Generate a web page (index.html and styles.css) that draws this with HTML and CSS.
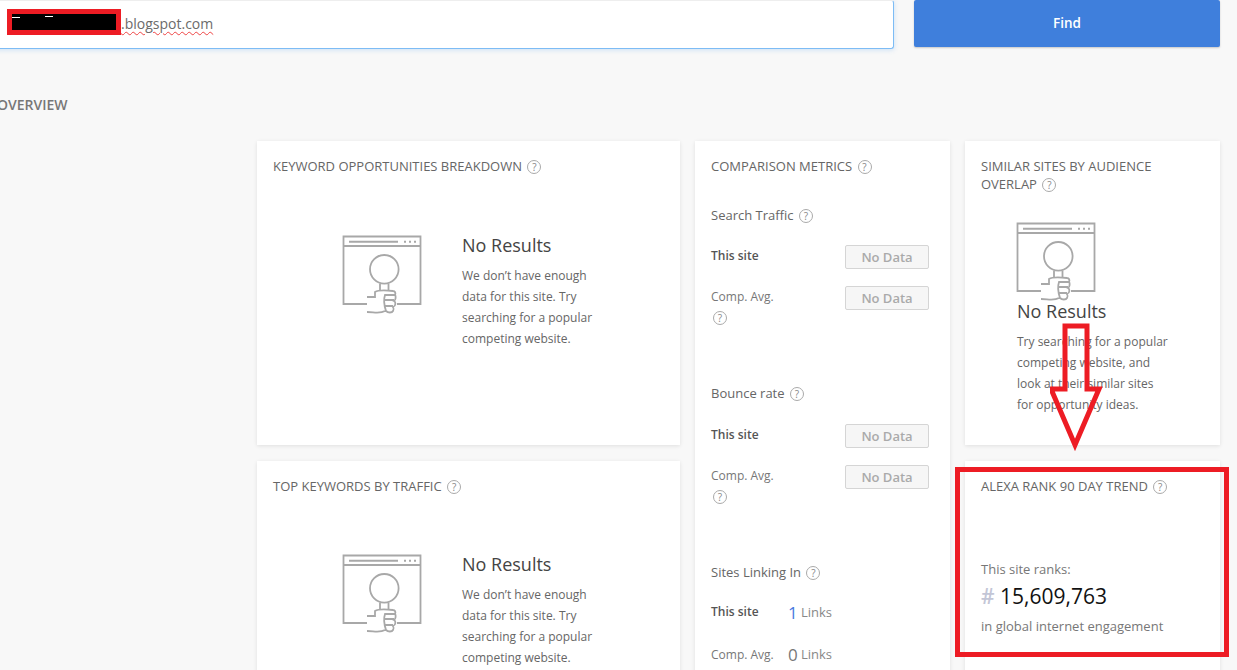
FILE: index.html
```html
<!DOCTYPE html>
<html lang="en">
<head>
<meta charset="utf-8">
<title>Site overview</title>
<link rel="stylesheet" href="styles.css">
</head>
<body>
<svg class="defs" width="0" height="0" aria-hidden="true">
  <symbol id="noresult" viewBox="0 0 80 80">
    <g fill="none" stroke="#a8a8a8" stroke-width="1.8">
      <path d="M25 69H1.5V1.5H78.5V69H55"/>
      <path d="M1.5 11H78.5"/>
      <path d="M7 6.7H56" stroke-width="2"/>
      <path d="M62 6.7h2M67 6.7h2M72 6.7h2" stroke-width="2"/>
      <circle cx="42.3" cy="34.3" r="14.3"/>
      <path d="M38 48.5V55M46.5 48.5V55"/>
      <path d="M25 62L33 62V57C36 55 42 55 51 56C53 56 54 58 53 60H43C42 63 42 70 44 76C46 78 50 78 51 76C52 74 52 74 51 72C54 71 54 67 52 66C54 65 54 61 53 60M43 65H52M43 71H51M43 76C38 79 32 77 25 77"/>
    </g>
  </symbol>
</svg>
<div class="page">
  <div class="search">
    <div class="search-input"><span class="typed">.blogspot.com</span></div>
    <button class="find">Find</button>
  </div>
  <h2 class="overview">OVERVIEW</h2>
  <div class="grid">
    <section class="card keyword">
      <h3>KEYWORD OPPORTUNITIES BREAKDOWN <i class="help">?</i></h3>
      <div class="empty">
        <svg class="ill"><use href="#noresult"/></svg>
        <div class="empty-text">
          <h4>No Results</h4>
          <p>We don’t have enough data for this site. Try searching for a popular competing website.</p>
        </div>
      </div>
    </section>
    <section class="card metrics">
      <h3>COMPARISON METRICS <i class="help">?</i></h3>
      <div class="metric">
        <div class="metric-title">Search Traffic <i class="help">?</i></div>
        <div class="row"><b>This site</b><span class="nodata">No Data</span></div>
        <div class="row"><span class="lbl">Comp. Avg. <i class="help">?</i></span><span class="nodata">No Data</span></div>
      </div>
      <div class="metric bounce">
        <div class="metric-title">Bounce rate <i class="help">?</i></div>
        <div class="row"><b>This site</b><span class="nodata">No Data</span></div>
        <div class="row"><span class="lbl">Comp. Avg. <i class="help">?</i></span><span class="nodata">No Data</span></div>
      </div>
      <div class="metric">
        <div class="metric-title">Sites Linking In <i class="help">?</i></div>
        <div class="links"><b>This site</b><span class="num blue">1</span><span class="unit">Links</span></div>
        <div class="links"><span class="lbl-short">Comp. Avg.</span><span class="num">0</span><span class="unit">Links</span></div>
      </div>
    </section>
    <section class="card similar">
      <h3>SIMILAR SITES BY AUDIENCE OVERLAP <i class="help">?</i></h3>
      <div class="similar-body">
        <svg class="ill"><use href="#noresult"/></svg>
        <h4>No Results</h4>
        <p>Try searching for a popular competing website, and look at their similar sites for opportunity ideas.</p>
      </div>
    </section>
    <section class="card keyword">
      <h3>TOP KEYWORDS BY TRAFFIC <i class="help">?</i></h3>
      <div class="empty lower">
        <svg class="ill"><use href="#noresult"/></svg>
        <div class="empty-text">
          <h4>No Results</h4>
          <p>We don’t have enough data for this site. Try searching for a popular competing website.</p>
        </div>
      </div>
    </section>
    <section class="card alexa">
      <h3>ALEXA RANK 90 DAY TREND <i class="help">?</i></h3>
      <p class="ranks">This site ranks:</p>
      <div class="rank"><span class="hash">#</span> 15,609,763</div>
      <p class="engage">in global internet engagement</p>
    </section>
  </div>
</div>
<div class="redact"></div>
<div class="redbox"></div>
<svg class="arrow" width="60" height="135" viewBox="0 0 60 135" aria-hidden="true">
  <path d="M15 3H37V66H49L25 122L1 66H15Z" fill="none" stroke="#ed1c24" stroke-width="5"/>
</svg>
</body>
</html>
```
FILE: styles.css
```css
* { box-sizing: border-box; }
html, body { margin: 0; height: 670px; overflow: hidden; }
body { position: relative; background: #f8f8f8; font-family: "Open Sans", "Liberation Sans", sans-serif; color: #666; }
.defs { position: absolute; }
.page { padding-right: 17px; height: 670px; overflow: hidden; }
.search { display: flex; gap: 20px; height: 48px; }
.search-input { flex: 1; margin-left: -10px; height: 49px; background: #fff; border: 1px solid #7dbcf5; border-top-color: #eee; border-left: 0; border-radius: 0 3px 3px 0; box-shadow: 0 1px 5px rgba(100,170,240,.3); padding: 13px 0 0 131px; font-size: 14px; line-height: 20px; color: #6b6b6b; }
.typed { text-decoration: underline wavy #e44; text-decoration-thickness: 1px; text-underline-offset: 2px; }
.find { width: 306px; height: 47px; border: 0; border-radius: 2px; background: #3f7fdc; color: #fff; font: 600 13.5px/45px "Open Sans", sans-serif; box-shadow: 0 1px 2px rgba(0,0,0,.2); padding: 0; }
.overview { margin: 48px 0 0 -3px; font-size: 14px; line-height: 18px; font-weight: 600; color: #777; height: 27px; }
.grid { display: grid; grid-template-columns: 423px 255px 255px; grid-template-rows: 304px 304px; gap: 16px 15px; margin-left: 257px; margin-top: 18px; }
.card { background: #fff; box-shadow: 0 1px 4px rgba(0,0,0,.1); padding: 16px 16px 0; }
h3 { margin: 0; font-size: 13px; line-height: 18px; font-weight: 400; color: #666; }
.help { display: inline-block; width: 14px; height: 14px; border: 1px solid #aaa; border-radius: 50%; font-style: normal; font-size: 10px; line-height: 12px; text-align: center; color: #888; vertical-align: 0; margin-left: 2px; font-weight: 400; }
.empty { display: flex; margin: 60px 0 0 69px; gap: 40px; }
.empty.lower { margin-top: 59px; }
.ill { width: 80px; height: 80px; display: block; flex: none; }
.empty-text { width: 140px; margin-top: -3px; }
h4 { margin: 0; font-size: 18px; line-height: 26px; font-weight: 400; color: #444; }
p { margin: 0; }
.empty-text p, .similar-body p { font-size: 12px; line-height: 21px; color: #666; }
.empty-text p { margin-top: 7px; }
.metrics { grid-row: span 2; }
.metric { height: 178px; }
.metric.bounce { height: 179px; }
.metric-title { font-size: 13px; line-height: 18px; color: #666; padding-top: 31px; height: 70px; }
.bounce .metric-title { height: 71px; }
.row { display: flex; justify-content: space-between; align-items: flex-start; padding-right: 5px; height: 41px; }
.row b { padding-top: 1px; }
.row b, .links b { font-size: 12px; line-height: 20px; font-weight: 600; color: #555; }
.lbl { width: 70px; font-size: 12px; line-height: 21px; color: #777; }
.nodata { width: 84px; height: 24px; background: #f6f6f6; border: 1px solid #d5d5d5; border-radius: 2px; text-align: center; font-size: 13px; font-weight: 600; line-height: 23px; color: #aaa; }
.links { display: flex; align-items: center; height: 42px; font-size: 13px; }
.metric-title + .links { margin-top: -11px; }
.links b, .lbl-short { width: 77px; font-size: 12px; }
.lbl-short { color: #777; }
.num { font-size: 17px; width: 13px; color: #777; }
.blue { color: #4a78e0; }
.unit { color: #888; }
.similar-body { margin: 29px 0 0 35px; width: 155px; }
.similar-body h4 { margin-top: -4px; padding-left: 1px; }
.similar-body p { margin-top: 7px; padding-left: 1px; }
.alexa p { font-size: 13px; line-height: 18px; color: #777; }
.ranks { margin-top: 65px; }
.rank { font-size: 21px; line-height: 28px; color: #111; margin-top: 4px; }
.hash { color: #c3c6d6; font-weight: 600; }
.engage { margin-top: 7px; }
.redact { position: absolute; left: 7px; top: 9px; width: 114px; height: 26px; background: #000; border: 5px solid #ed1c24; }
.redact::before { content: ""; position: absolute; left: 0; top: 3px; width: 8px; height: 1px; background: #fff; box-shadow: 33px -1px 0 0 #fff; }
.redbox { position: absolute; left: 955px; top: 467px; width: 274px; height: 190px; border: 5px solid #ed1c24; }
.arrow { position: absolute; left: 1050px; top: 323px; }
```
